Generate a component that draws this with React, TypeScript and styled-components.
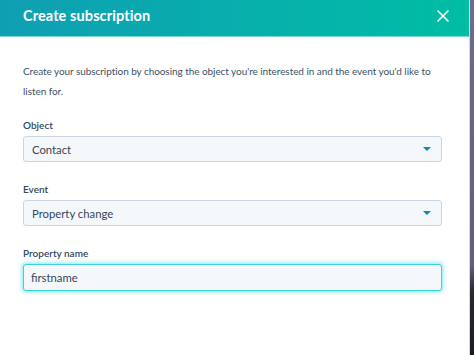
import React, { useState } from "react";
import styled, { createGlobalStyle } from "styled-components";

const GlobalStyle = createGlobalStyle`
  html, body {
    margin: 0;
    padding: 0;
    background: #ffffff;
  }
  body {
    font-family: Lato, "Noto Sans", sans-serif;
    color: #33475b;
  }
`;

const Screen = styled.div`
  display: flex;
  width: 474px;
  height: 355px;
  overflow: hidden;
`;

const Modal = styled.div`
  width: 469px;
  display: flex;
  flex-direction: column;
  background: #ffffff;
  border-right: 1px solid #d8d8e0;
`;

const Backdrop = styled.div`
  flex: 1;
  background: linear-gradient(to bottom, #6e6c92 0%, #5e5c80 75%, #2e2632 82%, #1e1a22 100%);
`;

const Header = styled.div`
  height: 37px;
  box-sizing: border-box;
  display: flex;
  align-items: center;
  justify-content: space-between;
  padding: 0 20px 5px 23px;
  background: linear-gradient(to right, #0f9fb3, #00bda5);
  border-bottom: 1px solid #7fd6d0;
`;

const Title = styled.h2`
  margin: 0;
  font-size: 14.5px;
  font-weight: 700;
  color: #ffffff;
  letter-spacing: 0.1px;
`;

const CloseButton = styled.button`
  border: none;
  background: none;
  padding: 0;
  display: flex;
  cursor: pointer;
`;

const Body = styled.div`
  padding: 24px 27px 0 23px;
  display: flex;
  flex-direction: column;
`;

const Intro = styled.p`
  margin: 0 0 17px;
  font-size: 10px;
  letter-spacing: -0.06px;
  line-height: 20px;
  color: #3d5266;
`;

const Field = styled.div`
  display: flex;
  flex-direction: column;
  margin-bottom: 20px;
`;

const Label = styled.label`
  font-size: 10px;
  font-weight: 600;
  line-height: 14px;
  margin-bottom: 4px;
  color: #33475b;
`;

const SelectBox = styled.div`
  height: 26px;
  box-sizing: border-box;
  display: flex;
  align-items: center;
  justify-content: space-between;
  padding: 0 10px 0 8px;
  background: #f5f8fa;
  border: 1px solid #cbd6e2;
  border-radius: 3px;
  font-size: 11.3px;
  color: #33475b;
`;

const Caret = styled.span`
  width: 0;
  height: 0;
  border-left: 4px solid transparent;
  border-right: 4px solid transparent;
  border-top: 4px solid #0091ae;
`;

const TextInput = styled.input<{ $focused?: boolean }>`
  height: 27px;
  box-sizing: border-box;
  padding: 0 7px;
  font-family: inherit;
  font-size: 11.3px;
  color: #33475b;
  background: #f5f8fa;
  border: 1px solid #3fcfd6;
  border-radius: 3px;
  outline: none;
  box-shadow: ${(p) => (p.$focused ? "0 0 4px 1px rgba(0, 208, 228, 0.5)" : "none")};
  caret-color: #33475b;
`;

const XIcon = () => (
  <svg width="12" height="12" viewBox="0 0 12 12">
    <path d="M1 1 L11 11 M11 1 L1 11" stroke="#ffffff" strokeWidth="1.6" strokeLinecap="round" />
  </svg>
);

const Select = ({ value }: { value: string }) => (
  <SelectBox>
    <span>{value}</span>
    <Caret />
  </SelectBox>
);

export default function App() {
  const [name, setName] = useState("firstname");
  return (
    <>
      <GlobalStyle />
      <Screen>
        <Modal>
          <Header>
            <Title>Create subscription</Title>
            <CloseButton aria-label="Close">
              <XIcon />
            </CloseButton>
          </Header>
          <Body>
            <Intro>
              Create your subscription by choosing the object you're interested in and the event you'd like to
              listen for.
            </Intro>
            <Field>
              <Label>Object</Label>
              <Select value="Contact" />
            </Field>
            <Field>
              <Label>Event</Label>
              <Select value="Property change" />
            </Field>
            <Field>
              <Label>Property name</Label>
              <TextInput $focused value={name} onChange={(e) => setName(e.target.value)} />
            </Field>
          </Body>
        </Modal>
        <Backdrop />
      </Screen>
    </>
  );
}
